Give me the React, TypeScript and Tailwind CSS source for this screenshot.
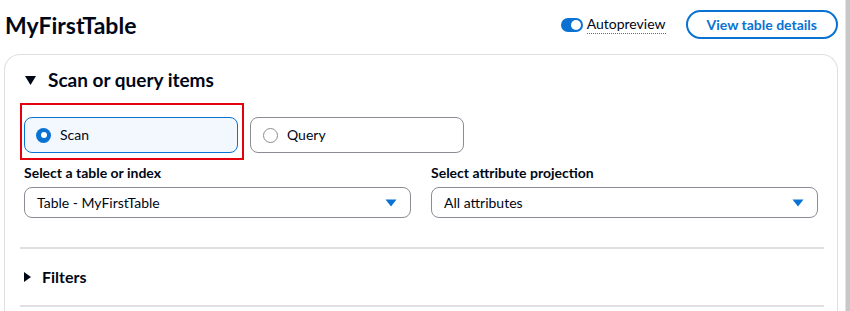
import React from "react";

const font = { fontFamily: 'Lato, "Noto Sans", Arial, sans-serif' };

function Caret() {
  return (
    <svg width="12" height="8" viewBox="0 0 12 8" className="shrink-0">
      <path d="M0.5 0.5 H11.5 L6 7.5 Z" fill="#0972d3" />
    </svg>
  );
}

function Select({ value }: { value: string }) {
  return (
    <div className="flex h-[31px] items-center justify-between rounded-[8px] border border-[#8c8c94] bg-white pl-[12px] pr-[13px]">
      <span className="text-[14px] leading-[20px] text-[#000716]">{value}</span>
      <Caret />
    </div>
  );
}

export default function App() {
  return (
    <div className="flex h-[311px] w-[850px] overflow-hidden bg-white text-[#000716]" style={font}>
      <div className="flex w-[845px] flex-col">
        {/* header */}
        <div className="flex h-[48px] items-center justify-between pl-[5px] pr-[7px] pt-[1px]">
          <h1 className="text-[23px] font-bold leading-[30px]">MyFirstTable</h1>
          <div className="flex items-center gap-[20px]">
            <div className="flex items-center gap-[4px]">
              <div className="relative h-[14px] w-[22px] rounded-full bg-[#0972d3]">
                <div className="absolute right-[2px] top-[2px] h-[10px] w-[10px] rounded-full bg-white" />
              </div>
              <span className="border-b border-dotted border-[#5f6b7a] text-[14px] leading-[18px]">Autopreview</span>
            </div>
            <button className="h-[29px] rounded-full border-2 border-[#0972d3] px-[19px] text-[14px] font-bold leading-[20px] text-[#0972d3]">
              View table details
            </button>
          </div>
        </div>

        {/* card */}
        <div className="ml-[4px] mt-[6px] w-[834px] flex-1 rounded-t-[16px] border border-b-0 border-[#dedee3] px-[19px] pt-[13px]">
          <div className="flex h-[24px] items-center">
            <svg width="11" height="9" viewBox="0 0 11 9" className="ml-[1px] mr-[12px]">
              <path d="M0 0 H11 L5.5 9 Z" fill="#000716" />
            </svg>
            <span className="text-[19px] font-bold leading-[24px]">Scan or query items</span>
          </div>

          <div className="relative mt-[25px] flex gap-[12px]">
            <div className="pointer-events-none absolute left-[-4px] top-[-14px] h-[57px] w-[224px] border-2 border-[#e3000f]" />
            <div className="flex h-[36px] w-[214px] items-center gap-[9px] rounded-[8px] border-[1.5px] border-[#0972d3] bg-[#f2f8fd] pl-[11px]">
              <div className="flex h-[15px] w-[15px] items-center justify-center rounded-full bg-[#0972d3]">
                <div className="h-[6px] w-[6px] rounded-full bg-white" />
              </div>
              <span className="text-[14px] leading-[20px]">Scan</span>
            </div>
            <div className="flex h-[36px] w-[214px] items-center gap-[9px] rounded-[8px] border-[1.5px] border-[#8c8c94] bg-white pl-[12px]">
              <div className="h-[15px] w-[15px] rounded-full border-[1.5px] border-[#8c8c94] bg-white" />
              <span className="text-[14px] leading-[20px]">Query</span>
            </div>
          </div>

          <div className="mt-[10px] grid grid-cols-2 gap-[20px]">
            <div>
              <div className="text-[14px] font-bold leading-[20px]">Select a table or index</div>
              <div className="mt-[4px]">
                <Select value="Table - MyFirstTable" />
              </div>
            </div>
            <div>
              <div className="text-[14px] font-bold leading-[20px]">Select attribute projection</div>
              <div className="mt-[4px]">
                <Select value="All attributes" />
              </div>
            </div>
          </div>

          <div className="ml-[-4px] mr-[-6px] mt-[29px] h-[2px] bg-[#e0e0e4]" />

          <div className="flex h-[56px] items-center">
            <svg width="7" height="10" viewBox="0 0 7 10" className="ml-0 mr-[11px]">
              <path d="M0 0 L7 5 L0 10 Z" fill="#000716" />
            </svg>
            <span className="text-[16px] font-bold leading-[20px]">Filters</span>
          </div>

          <div className="ml-[-4px] mr-[-6px] h-[2px] bg-[#e0e0e4]" />
        </div>
      </div>
      <div className="h-full w-[5px] border-l border-[#e2e2e2] bg-[#c8c8c8]" />
    </div>
  );
}
